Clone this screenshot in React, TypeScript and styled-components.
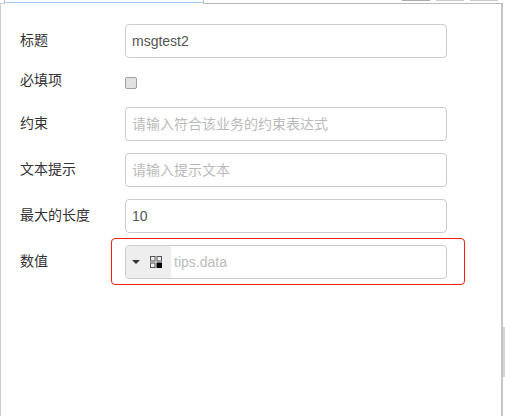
import React from 'react';
import styled, { createGlobalStyle } from 'styled-components';

const GlobalStyle = createGlobalStyle`
  html, body {
    margin: 0;
    padding: 0;
    background: #fff;
  }
`;

const Page = styled.div`
  width: 505px;
  height: 416px;
  overflow: hidden;
  display: flex;
  flex-direction: column;
  position: relative;
  background: #fff;
  font-family: "Helvetica Neue", "Liberation Sans", "Noto Sans CJK SC", sans-serif;
`;

const TabBar = styled.div`
  height: 4px;
  width: 503px;
  display: flex;
`;

const TabGutter = styled.div`
  width: 5px;
  box-sizing: border-box;
  border-right: 1px solid #bbb;
  border-bottom: 1px solid #ccc;
`;

const ActiveTab = styled.div`
  width: 198px;
  height: 3px;
  box-sizing: border-box;
  border-bottom: 1px solid #a6c9f5;
  background: #fff;
`;

const TabRest = styled.div`
  flex: 1;
  box-sizing: border-box;
  border-left: 1px solid #bbb;
  border-bottom: 1px solid #bbb;
  display: flex;
  justify-content: flex-end;
  gap: 6px;
  padding-right: 5px;
`;

const TabButton = styled.div<{ $dark?: boolean }>`
  width: 28px;
  height: 1px;
  background: ${props => (props.$dark ? '#aaa' : '#ccc')};
`;

const Panel = styled.div`
  width: 503px;
  flex: 1;
  box-sizing: border-box;
  border-left: 1px solid #ccc;
  border-right: 2px solid #c4c4c4;
  padding: 20px 53px 0 19px;
  display: flex;
  flex-direction: column;
  gap: 12px;
`;

const Row = styled.div<{ $short?: boolean }>`
  display: flex;
  height: ${props => (props.$short ? '25px' : '34px')};
  position: relative;
`;

const Label = styled.label<{ $short?: boolean }>`
  flex: 0 0 105px;
  font-size: 14px;
  line-height: 20px;
  color: #333;
  margin-top: ${props => (props.$short ? '0' : '6px')};
  height: 20px;
`;

const Input = styled.div`
  flex: 0 0 322px;
  height: 34px;
  box-sizing: border-box;
  border: 1px solid #ccc;
  border-radius: 4px;
  padding: 0 6px;
  font-size: 14px;
  line-height: 32px;
  color: #555;
  background: #fff;
`;

const Placeholder = styled.span`
  color: #bbb;
`;

const Checkbox = styled.div`
  width: 12px;
  height: 12px;
  margin-top: 7px;
  box-sizing: border-box;
  border: 1px solid #a0a0a0;
  border-radius: 2px;
  background: #e2e2e2;
`;

const TypedInput = styled.div`
  flex: 0 0 322px;
  height: 34px;
  box-sizing: border-box;
  border: 1px solid #ccc;
  border-radius: 4px;
  display: flex;
  overflow: hidden;
  font-size: 14px;
  line-height: 32px;
`;

const TypeButton = styled.div`
  width: 45px;
  background: #eee;
  display: flex;
  align-items: center;
  padding-left: 6px;
  gap: 10px;
  box-sizing: border-box;
`;

const Caret = styled.div`
  width: 0;
  height: 0;
  border-left: 4px solid transparent;
  border-right: 4px solid transparent;
  border-top: 4px solid #333;
`;

const TypedValue = styled.div`
  padding-left: 3px;
`;

const Highlight = styled.div`
  position: absolute;
  left: 111px;
  top: 238px;
  width: 354px;
  height: 47px;
  box-sizing: border-box;
  border: 1px solid #ff1a0e;
  border-radius: 4px;
  pointer-events: none;
`;

const ScrollThumb = styled.div`
  position: absolute;
  right: 0;
  top: 327px;
  width: 2px;
  height: 50px;
  background: #d4d4d4;
`;

const fields = [
  { label: '约束', placeholder: '请输入符合该业务的约束表达式' },
  { label: '文本提示', placeholder: '请输入提示文本' },
];

const BlocksIcon = () => (
  <svg width="12" height="12" viewBox="0 0 12 12">
    <rect x="0.5" y="0.5" width="4.5" height="4.5" fill="#eee" stroke="#555" />
    <rect x="7" y="0.5" width="4.5" height="4.5" fill="#eee" stroke="#555" />
    <rect x="0.5" y="7" width="4.5" height="4.5" fill="#eee" stroke="#555" />
    <rect x="6.5" y="6.5" width="5.5" height="5.5" fill="#000" />
  </svg>
);

export default function App() {
  return (
    <Page>
      <GlobalStyle />
      <TabBar>
        <TabGutter />
        <ActiveTab />
        <TabRest>
          <TabButton $dark />
          <TabButton />
          <TabButton />
        </TabRest>
      </TabBar>
      <Panel>
        <Row>
          <Label>标题</Label>
          <Input>msgtest2</Input>
        </Row>
        <Row $short>
          <Label $short>必填项</Label>
          <Checkbox />
        </Row>
        {fields.map(field => (
          <Row key={field.label}>
            <Label>{field.label}</Label>
            <Input>
              <Placeholder>{field.placeholder}</Placeholder>
            </Input>
          </Row>
        ))}
        <Row>
          <Label>最大的长度</Label>
          <Input>10</Input>
        </Row>
        <Row>
          <Label>数值</Label>
          <TypedInput>
            <TypeButton>
              <Caret />
              <BlocksIcon />
            </TypeButton>
            <TypedValue>
              <Placeholder>tips.data</Placeholder>
            </TypedValue>
          </TypedInput>
        </Row>
      </Panel>
      <Highlight />
      <ScrollThumb />
    </Page>
  );
}
